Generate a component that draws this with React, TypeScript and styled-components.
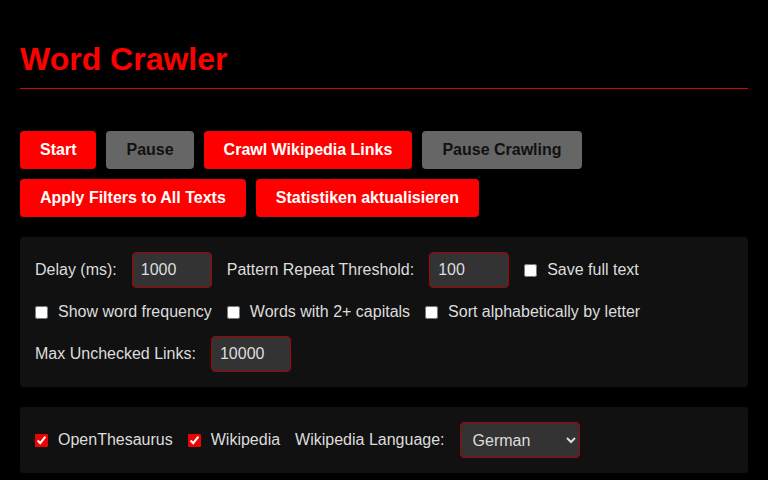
import React, { useState } from 'react'
import styled, { createGlobalStyle } from 'styled-components'

const GlobalStyle = createGlobalStyle`
  html, body {
    margin: 0;
    background: #000;
  }
  body {
    padding: 20px;
    font-family: 'Liberation Sans', Arial, sans-serif;
    color: #ddd;
  }
`

const Title = styled.h1`
  margin: 21px 0 0;
  padding-bottom: 10px;
  border-bottom: 1px solid #d00;
  color: #f00;
  font-size: 32px;
  font-weight: bold;
  line-height: 37px;
`

const Toolbar = styled.div`
  display: flex;
  flex-wrap: wrap;
  gap: 10px;
  margin-top: 42px;
  max-width: 600px;
`

const Button = styled.button<{ $muted?: boolean }>`
  border: none;
  border-radius: 4px;
  padding: 10px 20px;
  height: 38px;
  font-family: inherit;
  font-size: 16px;
  font-weight: bold;
  cursor: pointer;
  background: ${(p) => (p.$muted ? '#666' : '#f00')};
  color: ${(p) => (p.$muted ? '#111' : '#fff')};
`

const Panel = styled.section`
  margin-top: 20px;
  padding: 15px;
  background: #111;
  border-radius: 4px;
  display: flex;
  flex-direction: column;
  gap: 15px;
`

const Row = styled.div`
  display: flex;
  flex-wrap: wrap;
  align-items: center;
  gap: 15px;
  font-size: 16px;
`

// text label followed by its field
const Field = styled.label`
  display: flex;
  align-items: center;
  gap: 15px;
`

// checkbox followed by its text
const Option = styled.label`
  display: flex;
  align-items: center;
  gap: 10px;
`

const NumberInput = styled.input`
  box-sizing: border-box;
  width: 80px;
  height: 36px;
  padding: 8px;
  background: #333;
  color: #ddd;
  border: 1px solid #a00;
  border-radius: 4px;
  font-family: inherit;
  font-size: 16px;
`

const Check = styled.input`
  margin: 0;
  width: 13px;
  height: 13px;
  accent-color: #e00;
`

const Select = styled.select`
  box-sizing: border-box;
  width: 120px;
  height: 36px;
  padding: 0 8px;
  background: #333;
  color: #ddd;
  border: 1px solid #a00;
  border-radius: 4px;
  font-family: inherit;
  font-size: 16px;
`

const CheckOption = ({ text, checked }: { text: string; checked?: boolean }) => {
  const [on, setOn] = useState(!!checked)
  return (
    <Option>
      <Check type='checkbox' checked={on} onChange={() => setOn(!on)} />
      {text}
    </Option>
  )
}

export default function App() {
  const [delay, setDelay] = useState('1000')
  const [threshold, setThreshold] = useState('100')
  const [maxLinks, setMaxLinks] = useState('10000')

  return (
    <>
      <GlobalStyle />
      <Title>Word Crawler</Title>

      <Toolbar>
        <Button>Start</Button>
        <Button $muted>Pause</Button>
        <Button>Crawl Wikipedia Links</Button>
        <Button $muted>Pause Crawling</Button>
        <Button>Apply Filters to All Texts</Button>
        <Button>Statistiken aktualisieren</Button>
      </Toolbar>

      <Panel>
        <Row>
          <Field>
            Delay (ms):
            <NumberInput value={delay} onChange={(e) => setDelay(e.target.value)} />
          </Field>
          <Field>
            Pattern Repeat Threshold:
            <NumberInput value={threshold} onChange={(e) => setThreshold(e.target.value)} />
          </Field>
          <CheckOption text='Save full text' />
        </Row>
        <Row>
          <CheckOption text='Show word frequency' />
          <CheckOption text='Words with 2+ capitals' />
          <CheckOption text='Sort alphabetically by letter' />
        </Row>
        <Row>
          <Field>
            Max Unchecked Links:
            <NumberInput value={maxLinks} onChange={(e) => setMaxLinks(e.target.value)} />
          </Field>
        </Row>
      </Panel>

      <Panel>
        <Row>
          <CheckOption text='OpenThesaurus' checked />
          <CheckOption text='Wikipedia' checked />
          <Field>
            Wikipedia Language:
            <Select defaultValue='de'>
              <option value='de'>German</option>
              <option value='en'>English</option>
              <option value='fr'>French</option>
            </Select>
          </Field>
        </Row>
      </Panel>
    </>
  )
}
